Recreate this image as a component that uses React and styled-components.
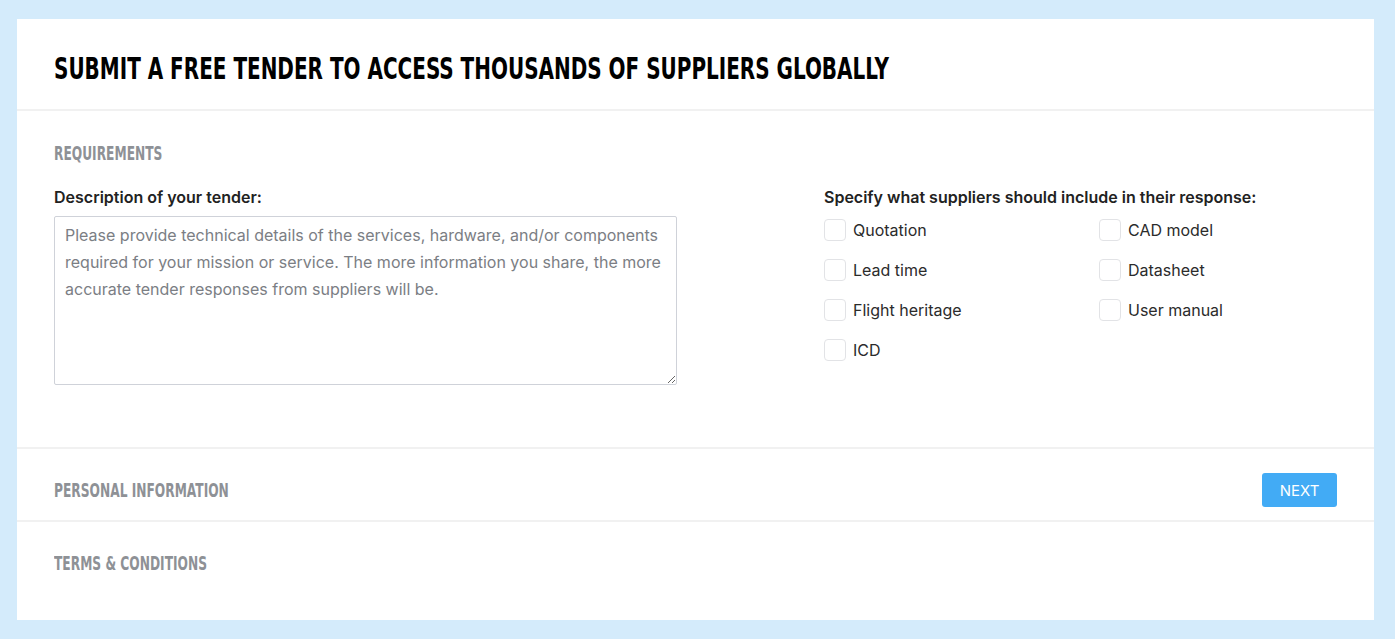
import React from "react";
import styled, { createGlobalStyle } from "styled-components";

const GlobalStyle = createGlobalStyle`
  html, body {
    margin: 0;
    padding: 0;
    background: #d4ebfb;
  }
  body {
    font-family: Inter, "Noto Sans", sans-serif;
    color: #222;
  }
  * {
    box-sizing: border-box;
  }
`;

const Page = styled.div`
  padding: 19px 21px 20px 17px;
`;

const Card = styled.div`
  background: #fff;
`;

const Header = styled.div`
  height: 92px;
  padding: 8px 37px 0;
  display: flex;
  align-items: center;
  border-bottom: 2px solid #f1f1f1;
`;

// condensed display face: no Barlow here, so squeeze DejaVu Sans Condensed
const Title = styled.h1`
  margin: 0;
  display: inline-block;
  font-family: "DejaVu Sans Condensed", "DejaVu Sans", sans-serif;
  font-weight: 700;
  font-size: 30px;
  color: #000;
  white-space: nowrap;
  transform: scaleX(0.74);
  transform-origin: left center;
`;

const Section = styled.section`
  padding: ${(p) => p.$pad || "0 37px"};
  border-bottom: ${(p) => (p.$last ? "none" : "2px solid #f1f1f1")};
  height: ${(p) => p.$height};
  display: flex;
  flex-direction: column;
  justify-content: ${(p) => (p.$center ? "center" : "flex-start")};
`;

const SectionRow = styled.div`
  display: flex;
  align-items: center;
  justify-content: space-between;
`;

const SectionTitle = styled.h2`
  margin: 0;
  display: inline-block;
  font-family: "DejaVu Sans Condensed", "DejaVu Sans", sans-serif;
  font-weight: 700;
  font-size: 20px;
  color: #8e9196;
  white-space: nowrap;
  transform: scaleX(0.68);
  transform-origin: left center;
`;

const Columns = styled.div`
  display: grid;
  grid-template-columns: 770px 1fr;
  margin-top: 22px;
`;

const Label = styled.div`
  font-size: 16px;
  font-weight: 600;
  color: #222;
  margin-bottom: ${(p) => p.$mb || "9px"};
`;

const TextArea = styled.textarea`
  display: block;
  width: 623px;
  height: 169px;
  padding: 5px 10px;
  border: 1px solid #cfd2d9;
  border-radius: 2px;
  font-family: Inter, "Noto Sans", sans-serif;
  font-size: 16px;
  line-height: 27px;
  color: #333;
  resize: vertical;
  outline: none;

  &::placeholder {
    color: #7b7e84;
  }
`;

const CheckGrid = styled.div`
  display: grid;
  grid-template-columns: 275px 1fr;
  row-gap: 18px;
`;

const CheckItem = styled.label`
  display: flex;
  align-items: center;
  gap: 7px;
  font-size: 16px;
  color: #2b2b2b;
  cursor: pointer;
`;

const Box = styled.span`
  width: 22px;
  height: 22px;
  border: 1px solid #e2e3e6;
  border-radius: 4px;
  background: #fff;
  flex: none;
`;

const NextButton = styled.button`
  width: 75px;
  height: 34px;
  border: none;
  border-radius: 3px;
  background: #42abf5;
  color: #fff;
  font-family: Inter, "Noto Sans", sans-serif;
  font-size: 15px;
  cursor: pointer;
`;

const options = [
  "Quotation",
  "CAD model",
  "Lead time",
  "Datasheet",
  "Flight heritage",
  "User manual",
  "ICD",
];

export default function App() {
  return (
    <>
      <GlobalStyle />
      <Page>
        <Card>
          <Header>
            <Title>SUBMIT A FREE TENDER TO ACCESS THOUSANDS OF SUPPLIERS GLOBALLY</Title>
          </Header>

          <Section $pad="30px 37px 0" $height="338px">
            <SectionTitle>REQUIREMENTS</SectionTitle>
            <Columns>
              <div>
                <Label>Description of your tender:</Label>
                <TextArea placeholder="Please provide technical details of the services, hardware, and/or components required for your mission or service. The more information you share, the more accurate tender responses from suppliers will be." />
              </div>
              <div>
                <Label $mb="12px">
                  Specify what suppliers should include in their response:
                </Label>
                <CheckGrid>
                  {options.map((o) => (
                    <CheckItem key={o}>
                      <Box />
                      {o}
                    </CheckItem>
                  ))}
                </CheckGrid>
              </div>
            </Columns>
          </Section>

          <Section $height="73px" $pad="11px 37px 0" $center>
            <SectionRow>
              <SectionTitle>PERSONAL INFORMATION</SectionTitle>
              <NextButton>NEXT</NextButton>
            </SectionRow>
          </Section>

          <Section $height="98px" $pad="29px 37px 0" $last>
            <SectionTitle>TERMS &amp; CONDITIONS</SectionTitle>
          </Section>
        </Card>
      </Page>
    </>
  );
}
